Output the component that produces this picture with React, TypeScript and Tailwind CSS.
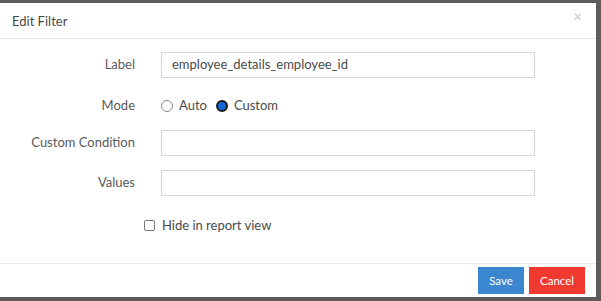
import React from "react";

const font = { fontFamily: "Lato, 'Open Sans', sans-serif" };

function Field({ label, value }: { label: string; value?: string }) {
  return (
    <div className="flex items-center h-[26px]">
      <div className="w-[136px] text-right pr-[1px] text-[13px] text-[#5a5a5a]">{label}</div>
      <div className="ml-[25px] w-[374px] h-[26px] border border-[#d6d6d6] bg-white flex items-center pl-[10px] text-[13px] text-[#4a4a4a]">
        {value}
      </div>
    </div>
  );
}

export default function App() {
  return (
    <div
      className="w-[601px] h-[301px] bg-[#5c5c5c] pt-[3px] pr-[5px] pb-[4px] overflow-hidden"
      style={font}
    >
      <div className="w-[596px] h-[294px] bg-white flex flex-col">
        {/* Header */}
        <div className="h-[36px] border-b border-[#e8e8e8] flex items-start justify-between pl-[12px] pr-[14px]">
          <span className="mt-[9px] text-[13px] text-[#4a4a4a]">Edit Filter</span>
          <span className="mt-[6px] text-[15px] text-[#c8c8c8] leading-none">×</span>
        </div>

        {/* Body */}
        <div className="flex-1 flex flex-col pt-[13px]">
          <Field label="Label" value="employee_details_employee_id" />

          <div className="flex items-center h-[26px] mt-[15px]">
            <div className="w-[136px] text-right pr-[1px] text-[13px] text-[#5a5a5a]">Mode</div>
            <div className="ml-[25px] flex items-center text-[13px] text-[#4a4a4a]">
              <span className="w-[12px] h-[12px] rounded-full border border-[#888] bg-white" />
              <span className="ml-[6px]">Auto</span>
              <span className="ml-[9px] w-[12px] h-[12px] rounded-full border-[2.5px] border-[#1a1a1a] bg-[#1565d8]" />
              <span className="ml-[6px]">Custom</span>
            </div>
          </div>

          <div className="mt-[11px]">
            <Field label="Custom Condition" />
          </div>
          <div className="mt-[14px]">
            <Field label="Values" />
          </div>

          <div className="flex items-center mt-[20px] pl-[144px] text-[13px] text-[#4a4a4a]">
            <span className="w-[11px] h-[11px] rounded-[2px] border border-[#777] bg-white" />
            <span className="ml-[7px]">Hide in report view</span>
          </div>
        </div>

        {/* Footer */}
        <div className="h-[34px] border-t border-[#ececec] flex items-center justify-end gap-[5px] pr-[11px]">
          <button className="w-[46px] h-[27px] bg-[#3a87d0] text-white text-[11.5px]">Save</button>
          <button className="w-[56px] h-[27px] bg-[#f0392f] text-white text-[11.5px]">Cancel</button>
        </div>
      </div>
    </div>
  );
}
